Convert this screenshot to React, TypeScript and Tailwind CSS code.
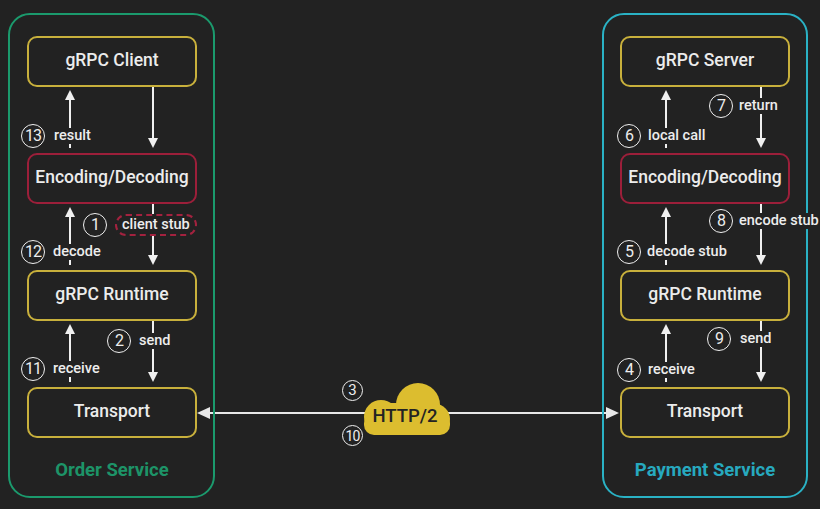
import React from "react";

const W = "#f0f0f0";

function Step({
  n,
  text,
  cls,
  gap = "ml-[9px]",
  stub,
}: {
  n: string;
  text: string;
  cls: string;
  gap?: string;
  stub?: boolean;
}) {
  return (
    <div className={`relative flex items-center self-start whitespace-nowrap ${cls}`}>
      <span className="w-6 h-6 shrink-0 rounded-full border-[1.5px] border-[#f0f0f0] bg-[#222222] flex items-center justify-center text-[16px] leading-none tracking-[-1px]">
        {n}
      </span>
      {stub ? (
        <span className={`${gap} h-[22px] px-[5px] rounded-full border-2 border-dashed border-[#a3223f] bg-[#222222] flex items-center text-[14.5px] font-medium`}>
          {text}
        </span>
      ) : (
        <span className={`${gap} bg-[#222222] leading-4 text-[14.5px] font-medium`}>{text}</span>
      )}
    </div>
  );
}

function Gap({ up, down, children }: { up: number; down: number; children?: React.ReactNode }) {
  return (
    <div className="relative h-[66px] flex flex-col">
      <svg className="absolute inset-0 w-full h-full" viewBox="0 0 170 66">
        <line x1={up} y1={12} x2={up} y2={61} stroke={W} strokeWidth={2} />
        <polygon points={`${up},3 ${up - 5},13 ${up + 5},13`} fill={W} />
        <line x1={down} y1={0} x2={down} y2={52} stroke={W} strokeWidth={2} />
        <polygon points={`${down - 5},51 ${down + 5},51 ${down},61`} fill={W} />
      </svg>
      {children}
    </div>
  );
}

function Box({ label, red }: { label: string; red?: boolean }) {
  return (
    <div
      className={`h-[51px] rounded-[10px] border-2 pb-[2px] ${
        red ? "border-[#9c1f3a]" : "border-[#c8b03c]"
      } flex items-center justify-center text-[17.5px] font-medium text-[#ececec]`}
    >
      {label}
    </div>
  );
}

function Cloud() {
  return (
    <div className="relative ml-[1px] mb-[8px] w-[86px] h-[52px] flex items-start justify-center">
      <svg className="absolute inset-0 w-full h-full" viewBox="0 0 86 52">
        <g fill="#dcbd2f">
          <circle cx="54" cy="22" r="22" />
          <circle cx="71" cy="36" r="15" />
          <circle cx="17" cy="34" r="17" />
          <rect x="0" y="30" width="86" height="22" rx="10" />
          <rect x="14" y="20" width="50" height="32" />
        </g>
      </svg>
      <span className="relative mt-[21px] ml-[-4px] text-[18.5px] leading-6 font-medium text-[#232323]">HTTP/2</span>
    </div>
  );
}

export default function App() {
  return (
    <div className="w-[820px] h-[509px] overflow-hidden bg-[#222222] text-[#ededed] font-[Roboto,Liberation_Sans,sans-serif] flex items-start pt-[13px] pl-[8px] pr-[12px]">
      {/* Order Service */}
      <div className="relative z-10 w-[207px] h-[485px] shrink-0 rounded-[22px] border-2 border-[#1b9a6d] pl-[17px] pr-[16px] pt-[21px] flex flex-col">
        <Box label="gRPC Client" />
        <Gap up={43} down={126}>
          <Step n="13" text="result" cls="-ml-[6px] mt-[37px]" />
        </Gap>
        <Box label="Encoding/Decoding" red />
        <Gap up={43} down={126}>
          <Step n="1" text="client stub" cls="ml-[56px] mt-[9px]" gap="ml-[8px]" stub />
          <Step n="12" text="decode" cls="-ml-[6px] mt-[3px]" gap="ml-[8px]" />
        </Gap>
        <Box label="gRPC Runtime" />
        <Gap up={43} down={126}>
          <Step n="2" text="send" cls="ml-[80px] mt-[8px]" gap="ml-[8px]" />
          <Step n="11" text="receive" cls="-ml-[6px] mt-[4px]" gap="ml-[8px]" />
        </Gap>
        <Box label="Transport" />
        <div className="mt-[20px] leading-6 text-center text-[18.5px] font-bold text-[#1d9468]">Order Service</div>
      </div>

      {/* Middle: HTTP/2 link */}
      <div className="flex-1 pt-[360px]">
        <div className="relative h-[80px] -ml-[18px] -mr-[17px] flex items-center justify-center">
          <div className="absolute inset-x-0 top-[34px] h-[12px] flex items-center">
            <svg width="13" height="12" viewBox="0 0 13 12" className="shrink-0">
              <polygon points="0,6 13,0 13,12" fill="#e8e8e8" />
            </svg>
            <div className="flex-1 h-[2px] bg-[#e8e8e8]" />
            <svg width="13" height="12" viewBox="0 0 13 12" className="shrink-0">
              <polygon points="13,6 0,0 0,12" fill="#e8e8e8" />
            </svg>
          </div>
          <div className="relative flex items-center pr-[24px]">
            <div className="flex flex-col gap-[24px]">
              <span className="w-[21px] h-[21px] rounded-full border-[1.5px] border-[#f0f0f0] flex items-center justify-center text-[15px] leading-none">
                3
              </span>
              <span className="w-[21px] h-[21px] rounded-full border-[1.5px] border-[#f0f0f0] flex items-center justify-center text-[14px] leading-none tracking-[-0.8px]">
                10
              </span>
            </div>
            <Cloud />
          </div>
        </div>
      </div>

      {/* Payment Service */}
      <div className="relative z-10 w-[206px] h-[485px] shrink-0 rounded-[22px] border-2 border-[#2ab2c5] px-[16px] pt-[21px] flex flex-col">
        <Box label="gRPC Server" />
        <Gap up={46} down={141}>
          <Step n="7" text="return" cls="ml-[89px] mt-[7px]" gap="ml-[6px]" />
          <Step n="6" text="local call" cls="-ml-[3px] mt-[6px]" gap="ml-[7px]" />
        </Gap>
        <Box label="Encoding/Decoding" red />
        <Gap up={46} down={141}>
          <Step n="8" text="encode stub" cls="ml-[89px] mt-[5px]" gap="ml-[6px]" />
          <Step n="5" text="decode stub" cls="-ml-[3px] mt-[7px]" gap="ml-[6px]" />
        </Gap>
        <Box label="gRPC Runtime" />
        <Gap up={46} down={141}>
          <Step n="9" text="send" cls="ml-[87px] mt-[6px]" gap="ml-[9px]" />
          <Step n="4" text="receive" cls="-ml-[3px] mt-[7px]" gap="ml-[7px]" />
        </Gap>
        <Box label="Transport" />
        <div className="mt-[20px] leading-6 text-center text-[18.5px] font-bold text-[#27a9bf]">Payment Service</div>
      </div>
    </div>
  );
}
